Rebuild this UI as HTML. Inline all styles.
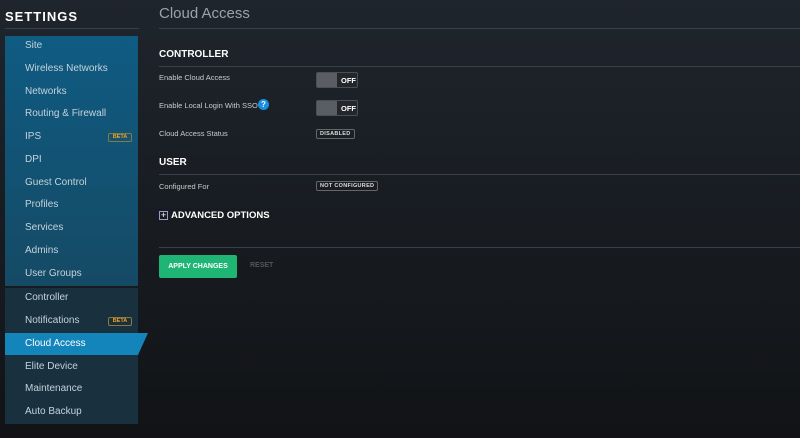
<!DOCTYPE html>
<html><head><style>
*{margin:0;padding:0;box-sizing:border-box}
body{width:800px;height:438px;overflow:hidden;background:linear-gradient(#1f252d,#181c21 50%,#111316);font-family:"Liberation Sans",sans-serif;color:#d8dde2;position:relative}
.abs{position:absolute}
.h{font-weight:bold;letter-spacing:1px;color:#fff;font-size:13px;left:5px;top:9px}
.side{left:5px;width:133px}
.g1{top:36px;height:250px;background:linear-gradient(#0f5b82,#154a65)}
.g2{top:288px;height:136px;background:#19303f}
.item{position:absolute;left:25px;font-size:10px;color:#c4d3dc}
.beta{position:absolute;left:108px;width:24px;height:9px;border:1px solid #8a7a3a;border-radius:2px;color:#f0a020;font-size:5.5px;font-weight:bold;text-align:center;line-height:7px}
.sel{left:5px;top:333px;width:143px;height:22px;background:#1485bb;clip-path:polygon(0 0,100% 0,93% 100%,0 100%)}
.lbl{left:159px;font-size:7.5px;color:#c8ccd0}
.sec{left:159px;font-size:10px;font-weight:bold;color:#fff}
.line{left:159px;right:0;height:1px;background:#3a4048}
.tog{left:316px;width:42px;height:16px;border:1px solid #4a4f55;border-radius:2px;background:#23272c}
.tog i{position:absolute;left:0;top:0;width:20px;height:14px;background:#5a5e64}
.tog b{position:absolute;left:24px;top:3px;font-size:7.5px;color:#fff}
.tag{left:316px;height:10px;border:1px solid #666;border-radius:2px;font-size:5.5px;font-weight:bold;color:#ddd;padding:0 3px;line-height:8px;letter-spacing:.3px}
</style></head><body>
<div class="abs h">SETTINGS</div>
<div class="abs" style="left:5px;top:28px;width:134px;height:1px;background:#3a4048"></div>
<div class="abs side g1"></div>
<div class="abs side g2"></div>
<div class="abs sel"></div>
<div class="item" style="top:40px">Site</div>
<div class="item" style="top:63px">Wireless Networks</div>
<div class="item" style="top:86px">Networks</div>
<div class="item" style="top:108px">Routing &amp; Firewall</div>
<div class="item" style="top:131px">IPS</div><div class="beta" style="top:133px">BETA</div>
<div class="item" style="top:154px">DPI</div>
<div class="item" style="top:177px">Guest Control</div>
<div class="item" style="top:199px">Profiles</div>
<div class="item" style="top:222px">Services</div>
<div class="item" style="top:245px">Admins</div>
<div class="item" style="top:268px">User Groups</div>
<div class="item" style="top:292px">Controller</div>
<div class="item" style="top:315px">Notifications</div><div class="beta" style="top:317px">BETA</div>
<div class="item" style="top:338px;color:#fff">Cloud Access</div>
<div class="item" style="top:361px">Elite Device</div>
<div class="item" style="top:383px">Maintenance</div>
<div class="item" style="top:406px">Auto Backup</div>

<div class="abs" style="left:159px;top:5px;font-size:15px;color:#9aa3ab">Cloud Access</div>
<div class="abs line" style="top:28px"></div>
<div class="abs sec" style="top:49px">CONTROLLER</div>
<div class="abs line" style="top:66px"></div>
<div class="abs lbl" style="top:73px">Enable Cloud Access</div>
<div class="abs tog" style="top:72px"><i></i><b>OFF</b></div>
<div class="abs lbl" style="top:101px">Enable Local Login With SSO</div>
<div class="abs" style="left:258px;top:99px;width:11px;height:11px;border-radius:50%;background:#1a8fe0;color:#fff;font-size:8px;font-weight:bold;text-align:center;line-height:11px">?</div>
<div class="abs tog" style="top:100px"><i></i><b>OFF</b></div>
<div class="abs lbl" style="top:129px">Cloud Access Status</div>
<div class="abs tag" style="top:129px">DISABLED</div>
<div class="abs sec" style="top:157px">USER</div>
<div class="abs line" style="top:174px"></div>
<div class="abs lbl" style="top:182px">Configured For</div>
<div class="abs tag" style="top:181px">NOT CONFIGURED</div>
<div class="abs" style="left:159px;top:211px;width:9px;height:9px;border:1px solid #9a9ad8;color:#fff;font-size:9px;line-height:7px;text-align:center">+</div>
<div class="abs sec" style="left:171px;top:210px;font-size:9.5px">ADVANCED OPTIONS</div>
<div class="abs line" style="top:247px"></div>
<div class="abs" style="left:159px;top:255px;width:78px;height:23px;background:#1fb574;border-radius:2px;color:#fff;font-size:7px;font-weight:bold;text-align:center;line-height:23px">APPLY CHANGES</div>
<div class="abs" style="left:250px;top:262px;font-size:7px;font-weight:bold;color:#555">RESET</div>
</body></html>
